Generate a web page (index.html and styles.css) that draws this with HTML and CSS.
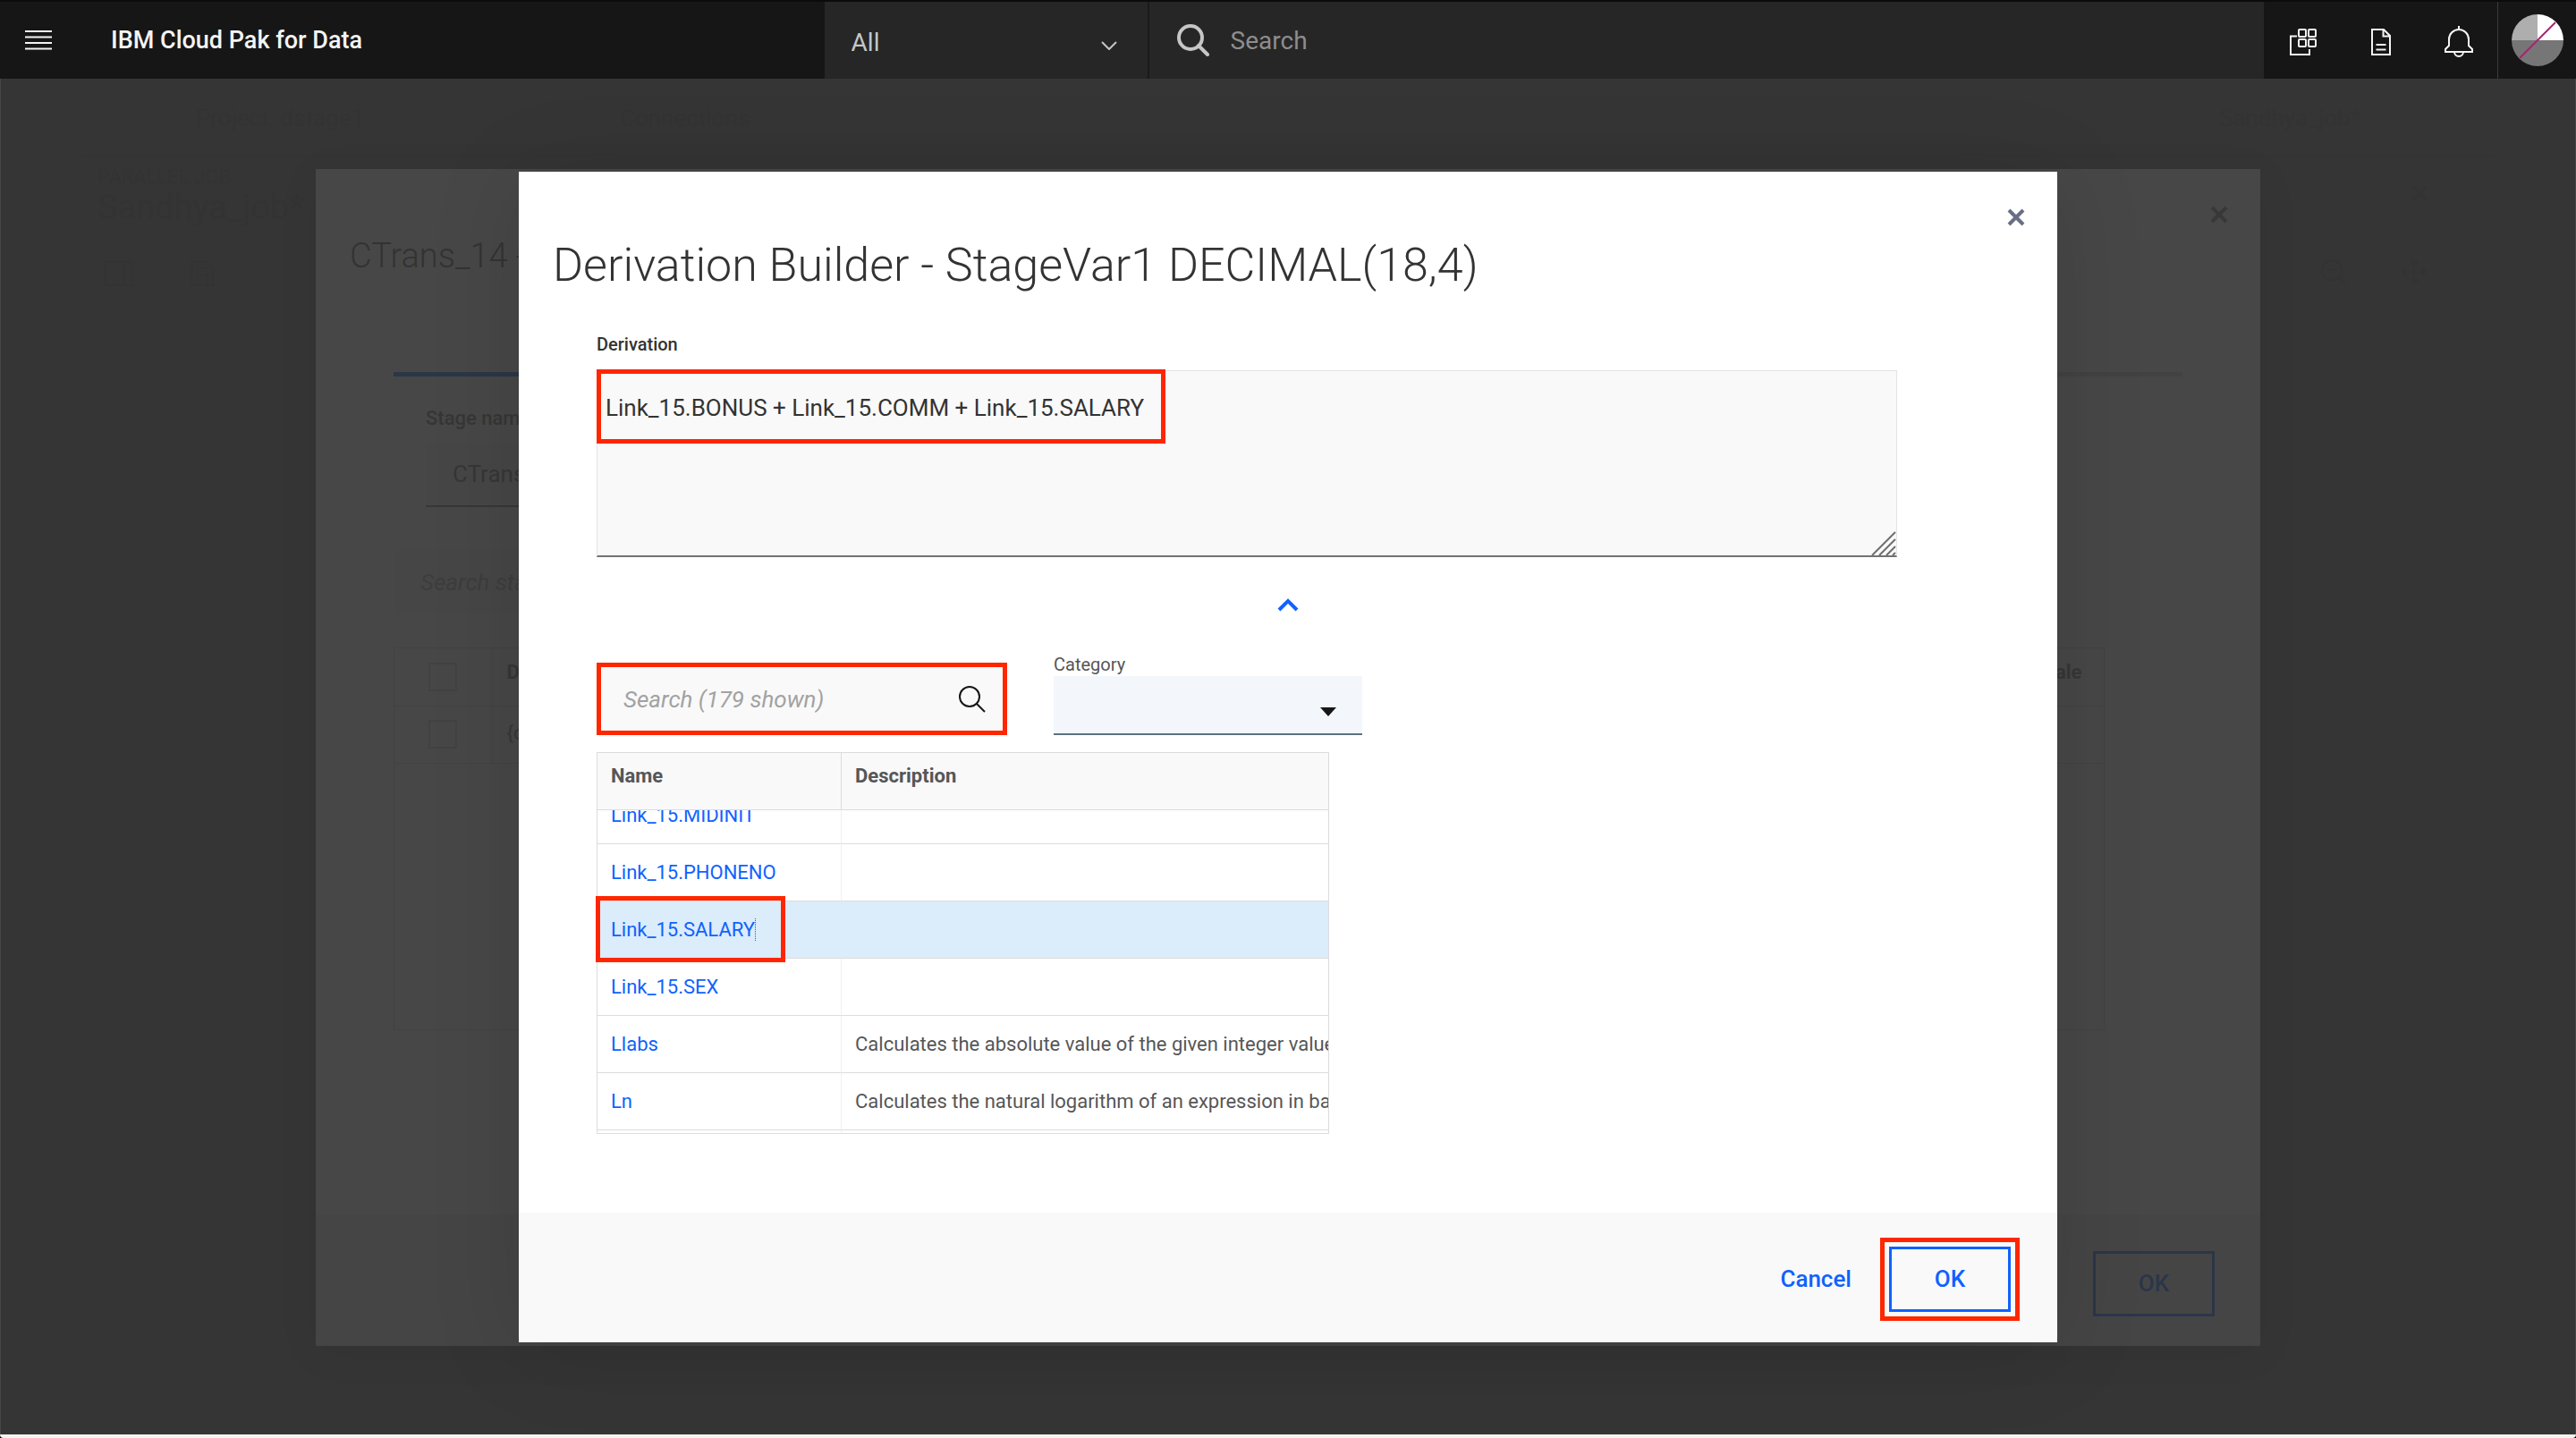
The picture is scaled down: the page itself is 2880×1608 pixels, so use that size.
FILE: index.html
```html
<!DOCTYPE html>
<html lang="en">
<head>
    <meta charset="UTF-8">
    <meta name="viewport" content="width=device-width, initial-scale=1.0">
    <title>IBM Cloud Pak for Data</title>
    <link rel="stylesheet" href="styles.css">
</head>
<body>
    <header class="topbar">
        <div class="brand">
            <button class="menu-button" aria-label="Menu">
                <svg width="30" height="22" viewBox="0 0 30 22"><path d="M0 1h30M0 7.500h30M0 14h30M0 20.500h30" stroke="#f4f4f4" stroke-width="2"/></svg>
            </button>
            <span class="brand-name">IBM Cloud Pak for Data</span>
        </div>
        <div class="scope">
            <select aria-label="Search scope">
                <option>All</option>
            </select>
            <svg class="scope-arrow" width="18" height="10" viewBox="0 0 18 10"><path d="M1 1l8 8 8-8" fill="none" stroke="#c6c6c6" stroke-width="2"/></svg>
        </div>
        <div class="global-search">
            <svg width="36" height="36" viewBox="0 0 36 36" fill="none" stroke="#c6c6c6" stroke-width="4"><circle cx="15" cy="15" r="13"/><path d="M24 24l10 10" stroke-linecap="round"/></svg>
            <input type="text" placeholder="Search" aria-label="Search">
        </div>
        <div class="actions">
            <button aria-label="Apps">
                <svg width="30" height="30" viewBox="0 0 30 30" fill="none" stroke="#f4f4f4" stroke-width="2"><rect x="10" y="1" width="8" height="8" rx="1"/><rect x="21" y="1" width="8" height="8" rx="1"/><rect x="10" y="12" width="8" height="8" rx="1"/><rect x="21" y="12" width="8" height="8" rx="1"/><path d="M8 8.500H1V29h21v-6"/></svg>
            </button>
            <button aria-label="Documents">
                <svg width="24" height="30" viewBox="0 0 24 30" fill="none" stroke="#f4f4f4" stroke-width="2"><path d="M2 1h13l7 7v21H2zM14.500 1v7.500H22"/><path d="M6.500 18h11M6.500 23.500h11"/></svg>
            </button>
            <button aria-label="Notifications">
                <svg width="34" height="36" viewBox="0 0 34 36" fill="none" stroke="#f4f4f4" stroke-width="2"><path d="M17 0v3M6 15a11 11 0 0 1 22 0v7l4 4v3H2v-3l4-4z"/><path d="M12 29a5 5 0 0 0 10 0"/></svg>
            </button>
            <button class="avatar" aria-label="Profile">
                <svg width="58" height="58" viewBox="0 0 58 58"><path d="M29 29V0A29 29 0 0 0 0 29z" fill="#aeaeae"/><path d="M29 29V0A29 29 0 0 1 58 29z" fill="#fff"/><path d="M0 29a29 29 0 0 0 58 0z" fill="#767676"/><path d="M9 49L49 9" stroke="#a62472" stroke-width="2"/></svg>
            </button>
        </div>
    </header>

    <main class="workspace">
        <nav class="crumbs">
            <span>Project: dstage1</span>
            <span>Connections</span>
            <span class="crumb-last">Sandhya_job*</span>
        </nav>
        <div class="job">
            <div>
                <div class="job-type">PARALLEL JOB</div>
                <div class="job-name">Sandhya_job*</div>
                <div class="job-tools">
                    <svg width="32" height="28" viewBox="0 0 32 28"><path d="M1 1h30v26H1zM21 1v26"/></svg>
                    <svg width="26" height="28" viewBox="0 0 26 28"><path d="M1 1h18l6 6v20H1zM8 1v7h10V1M7 27V15h12v12"/></svg>
                </div>
            </div>
            <div class="job-side">
                <svg width="16" height="16" viewBox="0 0 16 16"><path d="M1 1l14 14M15 1L1 15"/></svg>
                <div class="job-view">
                    <svg width="28" height="28" viewBox="0 0 28 28"><circle cx="12" cy="12" r="11"/><path d="M7 12h10M20 20l7 7"/></svg>
                    <svg width="28" height="28" viewBox="0 0 28 28"><path d="M14 1v26M1 14h26M10 5l4-4 4 4M10 23l4 4 4-4M5 10l-4 4 4 4M23 10l4 4-4 4"/></svg>
                </div>
            </div>
        </div>
    </main>
    <div class="window-edge"></div>

    <!-- Stage properties, dimmed behind the builder -->
    <div class="layer">
        <section class="dialog stage-dialog">
            <button class="close" aria-label="Close stage">
                <svg width="20" height="20" viewBox="0 0 20 20"><path d="M2 2l16 16M18 2L2 18" stroke="#383838" stroke-width="4"/></svg>
            </button>
            <h2>CTrans_14 -</h2>
            <div class="stage-body">
                <div class="tabline"><span></span></div>
                <div class="stage-field">
                    <label for="stageName">Stage name</label>
                    <input type="text" id="stageName" value="CTrans_14">
                </div>
                <input class="stage-search" type="text" placeholder="Search stage" aria-label="Search stage">
                <div class="stage-grid">
                    <table>
                        <tr>
                            <th class="check"><input type="checkbox" aria-label="Select all"></th>
                            <th>Derivation</th>
                            <th class="scale">Scale</th>
                        </tr>
                        <tr>
                            <td class="check"><input type="checkbox" aria-label="Select row"></td>
                            <td>{derivation}</td>
                            <td></td>
                        </tr>
                    </table>
                </div>
            </div>
            <footer>
                <button class="btn">OK</button>
            </footer>
        </section>
    </div>

    <!-- Derivation builder -->
    <div class="layer layer-front">
        <section class="dialog builder">
            <button class="close" aria-label="Close">
                <svg width="20" height="20" viewBox="0 0 20 20"><path d="M2 2l16 16M18 2L2 18" stroke="#686e87" stroke-width="4"/></svg>
            </button>
            <h1>Derivation Builder - StageVar1 DECIMAL(18,4)</h1>
            <div class="builder-body">
                <label class="derivation-label" for="derivation">Derivation</label>
                <div class="derivation-box">
                    <textarea id="derivation" spellcheck="false">Link_15.BONUS + Link_15.COMM + Link_15.SALARY</textarea>
                    <svg class="grip" width="28" height="28" viewBox="0 0 28 28"><path d="M1 27L27 1M9 27L27 9M17 27l10-10M24 27l3-3" stroke="#6f6f6f" stroke-width="2"/></svg>
                    <span class="mark mark-derivation"></span>
                </div>
                <button class="collapse" aria-label="Collapse">
                    <svg width="24" height="16" viewBox="0 0 24 16"><path d="M2 13L12 3l10 10" fill="none" stroke="#0f62fe" stroke-width="4"/></svg>
                </button>
                <div class="filters">
                    <div class="function-search">
                        <input type="text" placeholder="Search (179 shown)" aria-label="Search functions">
                        <svg width="30" height="30" viewBox="0 0 30 30" fill="none" stroke="#161616" stroke-width="2"><circle cx="12" cy="12" r="11"/><path d="M20 20l9 9"/></svg>
                    </div>
                    <div class="category">
                        <label for="category">Category</label>
                        <select id="category">
                            <option></option>
                        </select>
                        <svg class="caret" width="18" height="10" viewBox="0 0 18 10"><path d="M0 0h18l-9 10z" fill="#161616"/></svg>
                    </div>
                </div>
                <div class="functions-wrap">
                    <div class="functions" id="functions">
                        <table>
                            <thead>
                                <tr><th class="name">Name</th><th>Description</th></tr>
                            </thead>
                            <tbody>
                                <tr><td><a href="#">Link_15.MIDINIT</a></td><td></td></tr>
                                <tr><td><a href="#">Link_15.PHONENO</a></td><td></td></tr>
                                <tr class="selected"><td><a href="#">Link_15.SALARY</a></td><td></td></tr>
                                <tr><td><a href="#">Link_15.SEX</a></td><td></td></tr>
                                <tr><td><a href="#">Llabs</a></td><td>Calculates the absolute value of the given integer value</td></tr>
                                <tr><td><a href="#">Ln</a></td><td>Calculates the natural logarithm of an expression in base</td></tr>
                                <tr><td></td><td></td></tr>
                            </tbody>
                        </table>
                    </div>
                    <span class="mark mark-row"></span>
                </div>
            </div>
            <footer>
                <button class="btn-link">Cancel</button>
                <div class="ok-box">
                    <button class="btn">OK</button>
                </div>
            </footer>
        </section>
    </div>

    <script>
        document.getElementById('functions').scrollTop = 26;
    </script>
</body>
</html>
```
FILE: styles.css
```css
* {
    box-sizing: border-box;
}

body {
    margin: 0;
    min-height: 100vh;
    display: flex;
    flex-direction: column;
    position: relative;
    overflow: hidden;
    background: #000;
    color: #333;
    font-family: Roboto, "Liberation Sans", sans-serif;
    font-size: 28px;
}

button, input, select, textarea {
    font: inherit;
    color: inherit;
    margin: 0;
    padding: 0;
    border: 0;
    border-radius: 0;
    background: none;
    appearance: none;
}

svg {
    display: block;
}

/* Top bar */
.topbar {
    display: flex;
    height: 88px;
    border-top: 2px solid #0b0b0b;
    background: #262626;
}

.brand {
    width: 32%;
    display: flex;
    align-items: center;
    background: #161616;
}

.menu-button {
    width: 86px;
    display: flex;
    justify-content: center;
}

.brand-name {
    margin-left: 38px;
    color: #f4f4f4;
    font-size: 27px;
    font-weight: 500;
}

.scope {
    position: relative;
    width: 363px;
    border-right: 2px solid #1a1a1a;
}

.scope select {
    width: 100%;
    height: 100%;
    padding: 4px 0 0 30px;
    color: #c6c6c6;
}

.scope-arrow {
    position: absolute;
    right: 34px;
    top: 44px;
}

.global-search {
    flex: 1;
    display: flex;
    align-items: center;
    padding-left: 31px;
    gap: 24px;
}

.global-search input {
    flex: 1;
}

.global-search input::placeholder {
    color: #8d8d8d;
}

.actions {
    display: flex;
    background: #161616;
}

.actions button {
    width: 87px;
    padding-top: 4px;
    display: flex;
    align-items: center;
    justify-content: center;
}

.actions .avatar {
    width: 88px;
    padding: 0;
    border-left: 1px solid #393939;
}

/* Job page under the dialogs */
.workspace {
    flex: 1;
    padding: 0 92px;
    background: #353535;
    border: solid #474747;
    border-width: 0 1px;
    color: #333;
}

.crumbs {
    display: flex;
    padding: 24px 0;
    height: 88px;
    font-size: 26px;
    line-height: 40px;
    border-bottom: 4px solid #343434;
}

.crumbs span {
    width: 474px;
    padding-left: 126px;
}

.crumbs .crumb-last {
    width: 306px;
    padding-left: 0;
    margin-left: auto;
}

.job {
    display: flex;
    justify-content: space-between;
    padding: 8px 0 0 16px;
}

.job-type {
    font-size: 22px;
    line-height: 28px;
}

.job-name {
    font-size: 38px;
    line-height: 40px;
}

.job-tools {
    display: flex;
    gap: 64px;
    margin: 40px 8px;
}

.job svg {
    fill: none;
    stroke: #333;
    stroke-width: 2;
}

.job-side {
    display: flex;
    flex-direction: column;
    align-items: flex-end;
    gap: 66px;
    padding: 24px 74px 0 0;
}

.job-view {
    display: flex;
    gap: 62px;
}

.window-edge {
    height: 4px;
    background: #f3f3f3;
    border-radius: 0 0 6px 6px;
}

/* Dialogs */
.layer {
    position: absolute;
    top: 189px;
    left: 0;
    right: 0;
    display: flex;
    justify-content: center;
}

.layer-front {
    top: 192px;
}

.dialog {
    position: relative;
    width: 96%;
}

.close {
    position: absolute;
    top: 41px;
    right: 36px;
}

.dialog h1, .dialog h2 {
    margin: 0;
    padding-top: 73px;
    font-weight: 300;
}

.dialog footer {
    display: flex;
    align-items: center;
    justify-content: flex-end;
}

.btn {
    width: 136px;
    height: 73px;
    border: 3px solid #0f62fe;
    color: #0f62fe;
    font-size: 26px;
    font-weight: 500;
}

/* Stage dialog */
.stage-dialog {
    max-width: 2174px;
    background: #474747;
    color: #363636;
    box-shadow: 0 8px 48px rgba(0, 0, 0, 0.05);
}

.stage-dialog h2 {
    padding-left: 38px;
    font-size: 38px;
    line-height: 48px;
    color: #333;
}

.stage-body {
    padding: 106px 87px 0;
    height: 1048px;
}

.tabline {
    height: 5px;
    background: #424242;
}

.tabline span {
    display: block;
    width: 320px;
    height: 100%;
    background: #2b3648;
}

.stage-field {
    padding: 33px 36px 0;
}

.stage-field label {
    display: block;
    font-size: 22px;
    font-weight: 500;
    line-height: 28px;
    margin-bottom: 13px;
}

.stage-field input {
    width: 800px;
    height: 72px;
    padding-left: 30px;
    background: #464646;
    border-bottom: 2px solid #373737;
    font-size: 26px;
}

.stage-search {
    display: block;
    width: 460px;
    height: 72px;
    margin: 48px 0 37px;
    padding-left: 30px;
    background: #464646;
    font-size: 26px;
    font-style: italic;
}

.stage-search::placeholder {
    color: #3d3d3d;
}

.stage-grid {
    height: 428px;
    margin-right: 87px;
    border: 1px solid #424242;
}

.stage-grid table {
    width: 100%;
    border-collapse: collapse;
    font-size: 22px;
}

.stage-grid th, .stage-grid td {
    height: 64px;
    padding: 0 16px 4px;
    text-align: left;
    border-bottom: 1px solid #424242;
}

.stage-grid th {
    padding-bottom: 10px;
    font-weight: 700;
}

.stage-grid .check {
    width: 109px;
    padding: 0 38px;
    border-right: 1px solid #424242;
}

.stage-grid .check input {
    display: block;
    width: 32px;
    height: 32px;
    border: 2px solid #424242;
}

.stage-grid .scale {
    width: 95px;
}

.stage-dialog footer {
    height: 147px;
    padding: 7px 51px 0 0;
    background: #454545;
}

.stage-dialog .btn {
    border-color: #2b3648;
    color: #2b3648;
}

/* Derivation builder */
.builder {
    max-width: 1720px;
    background: #fff;
    box-shadow: 0 8px 96px rgba(0, 0, 0, 0.12);
}

.builder h1 {
    padding-left: 38px;
    font-size: 52px;
    line-height: 64px;
    color: #333;
}

.builder-body {
    padding: 44px 87px 88px;
}

.derivation-label {
    display: block;
    font-size: 20px;
    font-weight: 500;
    line-height: 24px;
    margin-bottom: 17px;
}

.derivation-box {
    position: relative;
    margin-right: 92px;
}

.derivation-box textarea {
    display: block;
    width: 100%;
    height: 209px;
    padding: 23px 9px;
    line-height: 36px;
    font-size: 26px;
    color: #333;
    background: #f9f9f9;
    border: 1px solid #e4e4e4;
    border-bottom: 2px solid #737373;
    resize: none;
}

.grip {
    position: absolute;
    right: 1px;
    bottom: 1px;
}

.mark {
    position: absolute;
    border: 5px solid #ff2600;
    pointer-events: none;
}

.mark-derivation {
    left: 0;
    top: -1px;
    width: 636px;
    height: 83px;
}

.collapse {
    display: flex;
    align-items: center;
    justify-content: center;
    width: 40px;
    height: 40px;
    margin: 34px auto;
}

.filters {
    display: flex;
    align-items: flex-end;
    gap: 52px;
}

.function-search {
    display: flex;
    align-items: center;
    width: 459px;
    height: 81px;
    padding: 0 19px 0 25px;
    background: #f9f9f9;
    border: 5px solid #ff2600;
}

.function-search input {
    flex: 1;
    min-width: 0;
    font-size: 26px;
    font-style: italic;
}

.function-search input::placeholder {
    color: #a2a2a2;
}

.category {
    position: relative;
    width: 345px;
}

.category label {
    display: block;
    font-size: 20px;
    line-height: 24px;
    margin-bottom: 1px;
    color: #565656;
}

.category select {
    display: block;
    width: 100%;
    height: 66px;
    padding-left: 16px;
    background: #f3f7fb;
    border-bottom: 2px solid #5f7180;
}

.caret {
    position: absolute;
    right: 29px;
    bottom: 21px;
}

.functions-wrap {
    position: relative;
    width: 819px;
    margin-top: 19px;
}

.functions {
    height: 427px;
    overflow: auto;
    scrollbar-width: none;
    border: 1px solid #dcdcdc;
}

.functions table {
    width: 100%;
    table-layout: fixed;
    border-collapse: separate;
    border-spacing: 0;
    font-size: 22px;
    color: #565656;
}

.functions th, .functions td {
    height: 64px;
    padding: 0 0 0 15px;
    text-align: left;
    white-space: nowrap;
    overflow: hidden;
    border-bottom: 1px solid #dcdcdc;
}

.functions th {
    position: sticky;
    top: 0;
    padding-bottom: 13px;
    background: #f9f9f9;
    font-weight: 700;
}

.functions .name {
    width: 273px;
}

.functions th:first-child {
    border-right: 1px solid #dcdcdc;
}

.functions td:first-child {
    border-right: 1px solid #f0f0f0;
}

.functions a {
    color: #0f62fe;
    text-decoration: none;
}

.functions .selected td {
    background: #dbecfb;
    border-right-color: #dbecfb;
}

.functions .selected a {
    border-right: 1px dotted #0f62fe;
}

.mark-row {
    left: -1px;
    top: 161px;
    width: 212px;
    height: 74px;
}

.builder footer {
    height: 145px;
    padding: 3px 42px 0 0;
    gap: 32px;
    background: #f9f9f9;
}

.btn-link {
    color: #0f62fe;
    font-size: 26px;
    font-weight: 500;
}

.ok-box {
    padding: 5px;
    border: 5px solid #ff2600;
}
```
